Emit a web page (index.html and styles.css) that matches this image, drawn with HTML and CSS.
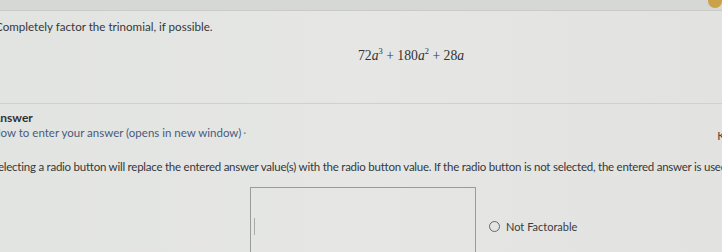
FILE: index.html
```html
<!DOCTYPE html>
<html>
<head>
<meta charset="utf-8">
<link rel="stylesheet" href="styles.css">
</head>
<body>
<div class="topbar"><span class="badge"></span></div>
<div class="question">
  <p class="prompt">Completely factor the trinomial, if possible.</p>
  <div class="math"><span class="num">72</span><i>a</i><sup>3</sup> + <span class="num">180</span><i>a</i><sup>2</sup> + <span class="num">28</span><i>a</i></div>
</div>
<div class="answer">
  <div class="answer-head">
    <div>
      <div class="title">Answer</div>
      <div class="howto">How to enter your answer (opens in new window)<span class="dot">·</span></div>
    </div>
    <div class="keypad">Keypad</div>
  </div>
  <p class="note">Selecting a radio button will replace the entered answer value(s) with the radio button value. If the radio button is not selected, the entered answer is used.</p>
  <div class="entry">
    <div class="box"><span class="caret"></span></div>
    <label class="radio"><span class="circle"></span>Not Factorable</label>
  </div>
</div>
</body>
</html>
```
FILE: styles.css
```css
html, body {
  margin: 0;
  padding: 0;
}
body {
  width: 722px;
  height: 252px;
  overflow: hidden;
  background: linear-gradient(90deg, #e2e4e2 0%, #e6e7e5 50%, #e2e3e0 100%);
  font-family: Lato, "Open Sans", sans-serif;
  color: #363739;
}
.topbar {
  height: 10px;
  background: #d6d8d6;
  border-bottom: 1px solid #c9cbc9;
  position: relative;
}
.badge {
  position: absolute;
  right: 0;
  top: -6px;
  width: 14px;
  height: 14px;
  border-radius: 50%;
  background: #c9a24a;
}
.question {
  height: 84px;
  padding-top: 8px;
  border-bottom: 1px solid #cfd1cf;
  margin-left: -5px;
}
.prompt {
  margin: 0;
  font-size: 11.6px;
  line-height: 16px;
}
.math {
  margin: 13px 0 0 363px;
  font-family: "Liberation Serif", serif;
  font-size: 13.7px;
  color: #333;
}
.math i {
  font-style: italic;
}
.math sup {
  font-size: 8.5px;
  vertical-align: 6px;
  line-height: 0;
}
.answer {
  margin-left: -8px;
}
.answer-head {
  display: flex;
  justify-content: space-between;
  padding-top: 6px;
}
.title {
  font-weight: 700;
  font-size: 12px;
  line-height: 15px;
  color: #303133;
}
.howto {
  font-size: 11.5px;
  line-height: 16px;
  color: #4a5a7c;
}
.dot {
  color: #888;
  margin-left: 2px;
}
.keypad {
  font-size: 11.5px;
  margin-top: 19px;
  margin-right: -33px;
  color: #444;
}
.note {
  margin: 17px 0 0 0;
  font-size: 11.5px;
  letter-spacing: -0.24px;
  line-height: 16px;
  white-space: nowrap;
}
.entry {
  display: flex;
  align-items: center;
  margin-top: 12px;
  margin-left: 258px;
}
.box {
  width: 224px;
  height: 78px;
  border: 1px solid #9a9c9c;
  border-bottom: none;
  position: relative;
}
.caret {
  position: absolute;
  left: 3px;
  top: 30px;
  width: 1px;
  height: 17px;
  background: #aaa;
}
.radio {
  display: flex;
  align-items: center;
  margin-left: 13px;
  font-size: 11px;
  color: #3a3b3d;
}
.circle {
  width: 9px;
  height: 9px;
  border: 1px solid #666;
  border-radius: 50%;
  margin-right: 6px;
}
```
